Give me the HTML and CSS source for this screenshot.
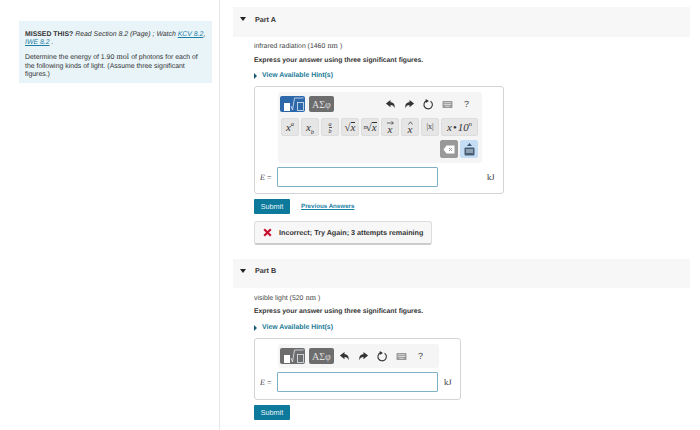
FILE: index.html
```html
<!DOCTYPE html>
<html lang="en">
<head>
    <meta charset="UTF-8">
    <title>Part A and Part B</title>
    <link rel="stylesheet" href="styles.css">
</head>
<body>
    <svg class="defs" width="0" height="0">
        <symbol id="undo" viewBox="0 0 12 12"><path d="M1 5 L6 1 V3.5 C9.5 3.5 11 6 10.5 10 C9.5 7.5 8.5 6.5 6 6.5 V9 Z"/></symbol>
        <symbol id="redo" viewBox="0 0 12 12"><path d="M11 5 L6 1 V3.5 C2.5 3.5 1 6 1.5 10 C2.5 7.5 3.5 6.5 6 6.5 V9 Z"/></symbol>
        <symbol id="reset" viewBox="0 0 12 12"><path d="M8.2 2.3 A4.6 4.6 0 1 1 3.6 2" fill="none" stroke="#333" stroke-width="1.2"/><path d="M3 0 L6.5 2.2 L3 4.4 Z"/></symbol>
        <symbol id="keys" viewBox="0 0 12 10"><rect x="0.5" y="1" width="11" height="8" rx="1" fill="#999"/><path d="M2 3h8M2 5h8M3.5 7h5" stroke="#ddd" stroke-width="1"/></symbol>
        <symbol id="tmpl" viewBox="0 0 24 16"><rect x="3" y="7" width="6" height="8" fill="#fff"/><path d="M10 10l1.5 4 2-12h9" stroke="#dfe8f2" stroke-width="0.8" fill="none"/><rect x="16.5" y="6.5" width="6" height="8" fill="none" stroke="#dfe8f2" stroke-width="0.8"/></symbol>
    </svg>

    <div class="page">
        <aside class="sidebar">
            <div class="intro">
                <p><b>MISSED THIS?</b> <i>Read Section 8.2 (Page) ; Watch <a href="#">KCV 8.2</a>, <a href="#">IWE 8.2</a> .</i></p>
                <p>Determine the energy of 1.90 <span class="unit">mol</span> of photons for each of the following kinds of light. (Assume three significant figures.)</p>
            </div>
        </aside>

        <main class="parts">
            <section class="part part-a">
                <header class="part-head"><span class="caret"></span><h2>Part A</h2></header>
                <div class="part-body">
                    <p class="prompt">infrared radiation (1460 <span class="unit">nm</span> )</p>
                    <p class="express">Express your answer using three significant figures.</p>
                    <p class="hint"><span class="hint-caret"></span><a href="#">View Available Hint(s)</a></p>

                    <div class="answer answer-wide">
                        <div class="toolbar">
                            <div class="tool-row">
                                <button class="mode mode-on"><svg width="24" height="16"><use href="#tmpl"/></svg></button>
                                <button class="mode">AΣφ</button>
                                <div class="actions">
                                    <svg class="ic" width="11" height="11"><use href="#undo"/></svg>
                                    <svg class="ic" width="11" height="11"><use href="#redo"/></svg>
                                    <svg class="ic" width="11" height="11"><use href="#reset"/></svg>
                                    <svg class="ic" width="11" height="9"><use href="#keys"/></svg>
                                    <span class="help">?</span>
                                </div>
                            </div>
                            <div class="tool-row keys">
                                <button class="key"><i>x<sup>a</sup></i></button>
                                <button class="key"><i>x<sub>b</sub></i></button>
                                <button class="key frac"><i>a</i><i>b</i></button>
                                <button class="key">√<i class="over">x</i></button>
                                <button class="key"><sup class="root">n</sup>√<i class="over">x</i></button>
                                <button class="key stacked">
                                    <svg width="7" height="4" viewBox="0 0 7 4"><path d="M0 2h6M4.5 0.5L6.5 2L4.5 3.5" fill="none" stroke="#333" stroke-width="0.7"/></svg>
                                    <i>x</i>
                                </button>
                                <button class="key stacked">
                                    <svg width="5" height="4" viewBox="0 0 5 4"><path d="M0.5 3.5L2.5 0.8L4.5 3.5" fill="none" stroke="#333" stroke-width="0.7"/></svg>
                                    <i>x</i>
                                </button>
                                <button class="key small">|x|</button>
                                <button class="key wide"><i>x</i>•<i>10<sup>n</sup></i></button>
                            </div>
                            <div class="tool-row extra">
                                <button class="key dark">
                                    <svg width="12" height="9" viewBox="0 0 12 9"><path d="M3.5 0.5H11.5V8.5H3.5L0.5 4.5Z" fill="#fff"/><path d="M6 3l3 3M9 3l-3 3" stroke="#999" stroke-width="1"/></svg>
                                </button>
                                <button class="key light">
                                    <svg width="11" height="13" viewBox="0 0 11 13"><path d="M5.5 0L8 3H3Z" fill="#3c5a78"/><rect x="0.5" y="4.5" width="10" height="8" rx="1" fill="#4a5f73"/><path d="M2 7h7M2 9h7" stroke="#cfe0f2"/></svg>
                                </button>
                            </div>
                        </div>
                        <div class="entry">
                            <span class="var"><i>E</i> =</span>
                            <input class="field" type="text">
                            <span class="unit unit-a">kJ</span>
                        </div>
                    </div>

                    <div class="submit-row">
                        <button class="submit">Submit</button>
                        <a class="prev" href="#">Previous Answers</a>
                    </div>
                    <div class="feedback">
                        <svg width="9" height="9" viewBox="0 0 9 9"><path d="M1.2 1.2L7.8 7.8M7.8 1.2L1.2 7.8" stroke="#c8102e" stroke-width="2.2"/></svg>
                        <span>Incorrect; Try Again; 3 attempts remaining</span>
                    </div>
                </div>
            </section>

            <section class="part part-b">
                <header class="part-head"><span class="caret"></span><h2>Part B</h2></header>
                <div class="part-body">
                    <p class="prompt">visible light (520 <span class="unit">nm</span> )</p>
                    <p class="express">Express your answer using three significant figures.</p>
                    <p class="hint"><span class="hint-caret"></span><a href="#">View Available Hint(s)</a></p>

                    <div class="answer answer-narrow">
                        <div class="toolbar toolbar-short">
                            <div class="tool-row">
                                <button class="mode mode-off"><svg width="24" height="16"><use href="#tmpl"/></svg></button>
                                <button class="mode">AΣφ</button>
                                <svg class="ic" width="11" height="11"><use href="#undo"/></svg>
                                <svg class="ic" width="11" height="11"><use href="#redo"/></svg>
                                <svg class="ic" width="11" height="11"><use href="#reset"/></svg>
                                <svg class="ic" width="11" height="9"><use href="#keys"/></svg>
                                <span class="help">?</span>
                            </div>
                        </div>
                        <div class="entry">
                            <span class="var"><i>E</i> =</span>
                            <input class="field" type="text">
                            <span class="unit unit-b">kJ</span>
                        </div>
                    </div>

                    <div class="submit-row">
                        <button class="submit">Submit</button>
                    </div>
                </div>
            </section>
        </main>
    </div>
</body>
</html>
```

FILE: styles.css
```css
html, body {
    margin: 0;
    height: 100%;
    overflow: hidden;
}

body {
    font-family: "Liberation Sans", Arial, sans-serif;
    font-size: 7.2px;
    text-rendering: geometricPrecision;
    color: #333;
    background-color: #fff;
}

p {
    margin: 0;
}

button {
    font-family: inherit;
    padding: 0;
    border: none;
}

.defs {
    position: absolute;
}

.page {
    display: flex;
    height: 430px;
}

.sidebar {
    width: 220px;
    flex: none;
    box-sizing: border-box;
    padding: 21px 7px 0 19px;
    border-right: 1px solid #e6e6e6;
}

.intro {
    height: 62px;
    box-sizing: border-box;
    padding: 10px 6px 0;
    background-color: #e8f4f8;
    font-size: 6.9px;
    line-height: 8.4px;
}

.intro p + p {
    margin-top: 5.5px;
}

.intro a {
    color: #1c7fa6;
}

.unit {
    margin: 0 0.3px;
    font-family: "Liberation Serif", serif;
    font-size: 8px;
    line-height: 1;
}

.parts {
    flex: 1;
    padding: 7px 10px 0 13px;
}

.part-head {
    display: flex;
    align-items: center;
    height: 30px;
    padding-bottom: 6px;
    box-sizing: border-box;
    background-color: #f7f7f7;
}

.part-b {
    margin-top: 14px;
}

.part-b .part-head {
    height: 29px;
}

.caret {
    width: 0;
    height: 0;
    margin-left: 7px;
    border-left: 3px solid transparent;
    border-right: 3px solid transparent;
    border-top: 4px solid #222;
}

.part-head h2 {
    margin: 0 0 0 9px;
    font-size: 7.2px;
    font-weight: bold;
    color: #333;
}

.part-body {
    padding: 4px 0 0 21px;
}

.part-b .part-body {
    padding-top: 5px;
}

.prompt {
    line-height: 11px;
    font-size: 6.9px;
    color: #444;
}

.express {
    margin-top: 3px;
    line-height: 11px;
    font-size: 6.8px;
    font-weight: bold;
    color: #333;
}

.part-b .express {
    margin-top: 2px;
}

.hint {
    display: flex;
    align-items: center;
    margin-top: 4px;
    line-height: 11px;
    font-size: 6.9px;
    font-weight: bold;
}

.part-b .hint {
    margin-top: 5px;
}

.hint-caret {
    width: 0;
    height: 0;
    border-top: 3px solid transparent;
    border-bottom: 3px solid transparent;
    border-left: 3px solid #1b5a72;
    margin-right: 5px;
}

.hint a {
    color: #1a7a96;
    text-decoration: none;
}

.answer {
    box-sizing: border-box;
    margin-top: 5px;
    padding: 5px 0 0 23px;
    border: 1px solid #d4d4d4;
    border-radius: 3px;
}

.answer-wide {
    width: 250px;
    height: 108px;
}

.answer-narrow {
    width: 207px;
    height: 62px;
}

.toolbar {
    box-sizing: border-box;
    width: 204px;
    height: 71px;
    padding: 4px 3px 0 2px;
    background-color: #f5f5f5;
    border-radius: 3px;
}

.toolbar-short {
    width: 161px;
    height: 24px;
}

.tool-row {
    display: flex;
    align-items: center;
    gap: 4px;
}

.mode {
    width: 25px;
    height: 16px;
    border-radius: 2px;
    background-color: #6d6d6d;
    color: #ddd;
    font-family: "Liberation Serif", serif;
    font-size: 10px;
    display: flex;
    align-items: center;
    justify-content: center;
}

.mode-on {
    background-color: #2d68ab;
}

.mode-off {
    background-color: #6d6d6d;
}

.actions {
    display: flex;
    align-items: center;
    gap: 8px;
    margin-left: 47px;
}

.ic {
    fill: #333;
    flex: none;
}

.toolbar-short .tool-row {
    gap: 0;
}

.toolbar-short .mode + .mode {
    margin-left: 4px;
    margin-right: 5px;
}

.toolbar-short .ic {
    margin-right: 8px;
}

.help {
    font-size: 9px;
    width: 11px;
    text-align: center;
    color: #444;
}

.keys {
    gap: 2px;
    margin-top: 6px;
    margin-left: 1px;
}

.key {
    flex: none;
    box-sizing: border-box;
    width: 18px;
    height: 18px;
    background-color: #e6e6e6;
    border: 1px solid #ddd;
    border-radius: 2px;
    color: #333;
    font-family: "Liberation Serif", serif;
    font-size: 11px;
    line-height: 14px;
    display: flex;
    align-items: center;
    justify-content: center;
}

.key sup, .key sub {
    font-size: 6.5px;
    line-height: 0;
}

.frac {
    flex-direction: column;
    font-size: 6px;
    line-height: 6px;
}

.frac i + i {
    border-top: 1px solid #555;
}

.over {
    border-top: 1px solid #333;
    line-height: 9px;
}

.root {
    margin-right: -1px;
}

.stacked {
    flex-direction: column;
    line-height: 9px;
}

.small {
    font-size: 8px;
}

.wide {
    width: 37px;
    gap: 1px;
    font-size: 11px;
}

.extra {
    justify-content: flex-end;
    gap: 2px;
    margin-top: 4px;
    padding-right: 1px;
}

.dark {
    background-color: #999;
    border-color: #999;
}

.light {
    background-color: #c5ddf5;
    border-color: #c5ddf5;
}

.entry {
    display: flex;
    align-items: center;
    margin-top: 4px;
    margin-left: -18px;
}

.var {
    width: 18px;
    font-family: "Liberation Serif", serif;
    font-size: 8px;
    color: #444;
}

.field {
    box-sizing: border-box;
    width: 161px;
    height: 20px;
    margin: 0 0 0 -1px;
    padding: 0;
    background-color: #fff;
    border: 1px solid #7fb0c8;
    border-radius: 1px;
    outline: none;
}

.unit-a {
    margin-left: 49px;
    font-size: 8.5px;
}

.unit-b {
    margin-left: 6px;
    font-size: 8.5px;
}

.submit-row {
    display: flex;
    align-items: center;
    margin-top: 5px;
}

.submit {
    width: 36px;
    height: 15px;
    background-color: #0d7a9c;
    color: #e8f6fa;
    font-size: 7.2px;
    border-radius: 1px;
}

.prev {
    margin-left: 11px;
    font-size: 6.2px;
    font-weight: bold;
    color: #1c7fa6;
}

.feedback {
    display: flex;
    align-items: center;
    gap: 7px;
    box-sizing: border-box;
    width: 178px;
    height: 24px;
    margin-top: 7px;
    padding-left: 8px;
    background-color: #f7f7f7;
    border: 1px solid #ddd;
    border-bottom: 2px solid #ccc;
    border-radius: 3px;
    font-weight: bold;
    color: #333;
}
```
